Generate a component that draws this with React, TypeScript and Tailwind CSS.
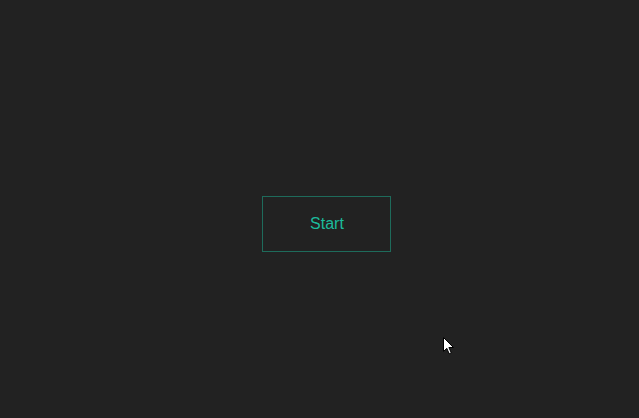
import React from "react";

export default function App() {
  return (
    <div className="relative w-[639px] h-[418px] bg-[#222222] flex items-center justify-center pl-[14px] pt-[29px] overflow-hidden" style={{ fontFamily: '"Liberation Sans", Arial, sans-serif' }}>
      <button className="w-[129px] h-[56px] border border-[#1e6b5b] text-[#1cbc9c] text-[16px] bg-transparent flex items-center justify-center pt-[1px] pl-[1px]">
        Start
      </button>
      <svg className="absolute left-[443px] top-[337px]" width="12" height="18" viewBox="0 0 12 18">
        <path d="M0.5 0.5 L0.5 14.5 L3.8 11.3 L6.2 16.8 L8.3 15.9 L5.9 10.5 L10.5 10.5 Z" fill="#ffffff" stroke="#000000" strokeWidth="1" />
      </svg>
    </div>
  );
}
